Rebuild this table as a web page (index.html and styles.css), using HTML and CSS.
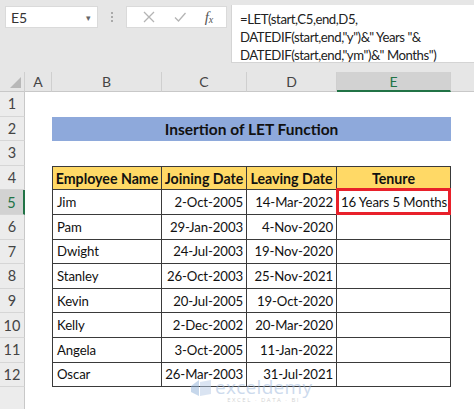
FILE: index.html
```html
<!DOCTYPE html>
<html>
<head>
<meta charset="utf-8">
<link rel="stylesheet" href="styles.css">
</head>
<body>
<div class="app">
  <div class="topbar">
    <div class="namebox"><span>E5</span><span class="caret">&#9662;</span></div>
    <div class="dots"><i></i><i></i><i></i></div>
    <div class="btns">
      <svg class="ic" width="14" height="14" viewBox="0 0 14 14"><path d="M2 2 L12 12 M12 2 L2 12" stroke="#b4b4b4" stroke-width="1.3" fill="none"/></svg>
      <svg class="ic" width="14" height="14" viewBox="0 0 14 14"><path d="M2 7.5 L5.5 11 L12.5 3" stroke="#b4b4b4" stroke-width="1.3" fill="none"/></svg>
      <span class="fx">f<sub>x</sub></span>
    </div>
    <div class="formula">=LET(start,C5,end,D5,<br>DATEDIF(start,end,"y")&amp;" Years "&amp;<br>DATEDIF(start,end,"ym")&amp;" Months")</div>
  </div>
  <div class="sheet">
    <div class="ch corner"><span class="tri"></span></div>
    <div class="ch">A</div><div class="ch">B</div><div class="ch">C</div><div class="ch">D</div><div class="ch sel">E</div><div class="ch blank"></div>

    <div class="rh">1</div><div></div><div></div><div></div><div></div><div></div><div></div>
    <div class="rh">2</div><div></div><div class="band">Insertion of LET Function</div><div></div>
    <div class="rh">3</div><div></div><div></div><div></div><div></div><div></div><div></div>
    <div class="rh">4</div><div></div><div class="t hd first">Employee Name</div><div class="t hd">Joining Date</div><div class="t hd">Leaving Date</div><div class="t hd">Tenure</div><div></div>
    <div class="rh rsel">5</div><div></div><div class="t first">Jim</div><div class="t r">2-Oct-2005</div><div class="t r">14-Mar-2022</div><div class="t sc"><span class="selbox"></span>16 Years 5 Months</div><div></div>
    <div class="rh">6</div><div></div><div class="t first">Pam</div><div class="t r">29-Jan-2003</div><div class="t r">4-Nov-2020</div><div class="t"></div><div></div>
    <div class="rh">7</div><div></div><div class="t first">Dwight</div><div class="t r">24-Jul-2003</div><div class="t r">19-Nov-2020</div><div class="t"></div><div></div>
    <div class="rh">8</div><div></div><div class="t first">Stanley</div><div class="t r">26-Oct-2003</div><div class="t r">25-Nov-2021</div><div class="t"></div><div></div>
    <div class="rh">9</div><div></div><div class="t first">Kevin</div><div class="t r">20-Jul-2005</div><div class="t r">19-Oct-2020</div><div class="t"></div><div></div>
    <div class="rh">10</div><div></div><div class="t first">Kelly</div><div class="t r">2-Dec-2002</div><div class="t r">20-Mar-2020</div><div class="t"></div><div></div>
    <div class="rh">11</div><div></div><div class="t first">Angela</div><div class="t r">3-Oct-2005</div><div class="t r">11-Jan-2022</div><div class="t"></div><div></div>
    <div class="rh">12</div><div></div><div class="t first">Oscar</div><div class="t r">26-Mar-2003</div><div class="t r">31-Jul-2021</div><div class="t"></div><div></div>
    <div class="rh filler"></div>
  </div>
  <div class="watermark">
    <svg width="22" height="20" viewBox="0 0 22 20"><path d="M1 8 L9 2 L9 18 L1 14 Z" fill="#8fb0d8"/><path d="M10 4 L21 2 L21 16 L10 18 Z" fill="#b7cbe6"/></svg>
    <div class="wm-text"><span class="wm-big">exceldemy</span><span class="wm-small">EXCEL · DATA · BI</span></div>
  </div>
</div>
</body>
</html>
```
FILE: styles.css
```css
html, body { margin: 0; padding: 0; }
body {
  width: 474px; height: 409px; overflow: hidden; background: #fff;
  font-family: Lato, "Open Sans", sans-serif; color: #000;
}
.app { position: relative; width: 474px; height: 409px; }
.topbar {
  height: 72px; background: #e6e6e6; display: flex; align-items: flex-start;
  box-sizing: border-box; padding-top: 6px;
}
.namebox {
  margin-left: 5px; width: 93px; height: 22px; background: #fff;
  box-sizing: border-box; border: 1px solid #dadada;
  display: flex; align-items: center; justify-content: space-between;
  padding: 0 6px 0 5px; font-size: 14px; color: #333;
}
.caret { font-size: 9px; color: #666; }
.dots {
  width: 28px; height: 22px; display: flex; flex-direction: column;
  align-items: center; justify-content: center; gap: 2px;
}
.dots i { display: block; width: 2px; height: 2px; background: #aaa; }
.btns {
  width: 101px; height: 22px; background: #fff;
  box-sizing: border-box; border: 1px solid #dadada;
  display: flex; align-items: center; justify-content: space-around; padding: 0 4px 0 6px;
}
.fx { font-family: "Liberation Serif", serif; font-style: italic; font-size: 15px; color: #555; line-height: 1; }
.fx sub { font-size: 10px; vertical-align: -1px; }
.formula {
  margin-left: 4px; margin-top: -1px; flex: 1; height: 58px; background: #fff;
  box-sizing: border-box; border-bottom: 1px solid #d4d4d4; border-left: 1px solid #d4d4d4;
  padding: 5px 0 0 8px; font-size: 13.2px; letter-spacing: -0.45px; line-height: 18px; color: #222; white-space: nowrap;
}
.sheet {
  display: grid;
  grid-template-columns: 25px 27px 110px 85px 90px 114px 1fr;
  grid-template-rows: 20px repeat(12, 24.6px) 1fr;
  height: 337px;
  font-size: 13px;
}
.ch {
  background: #e6e6e6; color: #444; font-size: 14px; display: flex;
  align-items: center; justify-content: center;
  border-right: 1px solid #cfcfcf; border-bottom: 1px solid #c8c8c8; box-sizing: border-box;
}
.ch.blank { border-right: none; }
.ch.sel { background: #d2d2d2; color: #217346; border-bottom: 2px solid #217346; }
.corner { position: relative; }
.tri {
  position: absolute; right: 3px; bottom: 3px; width: 0; height: 0;
  border-left: 11px solid transparent; border-bottom: 11px solid #b8b8b8;
}
.rh {
  grid-column: 1; background: #ececec; color: #444; font-size: 14.5px;
  display: flex; align-items: center; justify-content: center;
  border-right: 1px solid #c8c8c8; border-bottom: 1px solid #d6d6d6; box-sizing: border-box;
}
.rh.rsel { background: #d2d2d2; color: #217346; border-right: 2px solid #217346; }
.rh.filler { border-bottom: none; }
.band {
  grid-column: 3 / 7; background: #8ea9db; font-weight: 700; font-size: 15.5px;
  display: flex; align-items: center; justify-content: center; color: #111;
}
.t {
  box-sizing: border-box; border-right: 1px solid #3a3a3a; border-bottom: 1px solid #3a3a3a;
  display: flex; align-items: center; padding: 0 4px; white-space: nowrap; color: #111;
  font-size: 13.2px; letter-spacing: -0.1px;
}
.t.first { border-left: 1px solid #3a3a3a; }
.t.hd { background: #ffd966; font-weight: 700; justify-content: center; border-top: 1px solid #3a3a3a; font-size: 14.2px; padding: 0 2px; letter-spacing: 0; }
.t.r { justify-content: flex-end; padding-right: 3px; }
.t.sc { position: relative; padding-left: 4px; }
.selbox {
  position: absolute; left: -1px; top: -2px; right: -1px; bottom: -1px;
  border: 3px solid #e8202a; box-sizing: border-box;
}
.watermark {
  position: absolute; left: 190px; top: 378px; display: flex; align-items: flex-start; gap: 3px;
  opacity: 0.5;
}
.wm-text { display: flex; flex-direction: column; align-items: center; }
.wm-big { font-family: "Open Sans", sans-serif; font-size: 19px; line-height: 18px; color: #9ab6dc; letter-spacing: 0.3px; }
.wm-small { font-family: "Open Sans", sans-serif; font-size: 6px; line-height: 8px; color: #a9a9a9; letter-spacing: 1.5px; }
```
